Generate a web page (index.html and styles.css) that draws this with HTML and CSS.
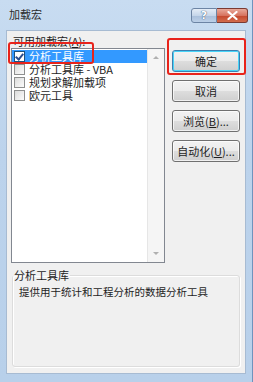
FILE: index.html
```html
<!DOCTYPE html>
<html>
<head>
    <title>加载宏</title>
    <link rel="stylesheet" href="styles.css">
</head>
<body>
    <div class="window">
        <div class="titlebar">
            <span class="title">加载宏</span>
            <div class="caption-buttons">
                <div class="cap-btn help">?</div>
                <div class="cap-btn close">
                    <svg width="11" height="9" viewBox="0 0 11 9">
                        <path d="M1.5 1 L9.5 8 M9.5 1 L1.5 8" stroke="#fff" stroke-width="2.2" stroke-linecap="round"/>
                    </svg>
                </div>
            </div>
        </div>
        <div class="client">
            <div class="label">可用加载宏(<u>A</u>):</div>
            <div class="main-row">
                <div class="listbox">
                    <div class="items">
                        <div class="item selected"><span class="check on"></span>分析工具库</div>
                        <div class="item"><span class="check"></span>分析工具库 - VBA</div>
                        <div class="item"><span class="check"></span>规划求解加载项</div>
                        <div class="item"><span class="check"></span>欧元工具</div>
                    </div>
                    <div class="scrollbar">
                        <span class="arrow up"></span>
                        <span class="arrow down"></span>
                    </div>
                </div>
                <div class="buttons">
                    <button class="btn default">确定</button>
                    <button class="btn">取消</button>
                    <button class="btn">浏览(<u>B</u>)...</button>
                    <button class="btn">自动化(<u>U</u>)...</button>
                </div>
            </div>
            <fieldset class="groupbox">
                <legend>分析工具库</legend>
                <div class="desc">提供用于统计和工程分析的数据分析工具</div>
            </fieldset>
        </div>
        <div class="mark mark-list"></div>
        <div class="mark mark-ok"></div>
    </div>
</body>
</html>
```
FILE: styles.css
```css
html, body {
    margin: 0;
    padding: 0;
}
body {
    width: 253px;
    height: 382px;
    overflow: hidden;
    font-family: "Noto Sans CJK SC", "Liberation Sans", sans-serif;
    font-size: 11px;
    color: #1e1e1e;
}
.window {
    position: relative;
    box-sizing: border-box;
    width: 253px;
    height: 382px;
    padding: 0 6px 8px 6px;
    display: flex;
    flex-direction: column;
    background: linear-gradient(to bottom, #c8dcf1 0%, #bcd3ec 40%, #b8d0ea 100%);
    border-right: 1px solid #6f93bd;
}
.titlebar {
    height: 30px;
    display: flex;
    align-items: flex-start;
    justify-content: space-between;
    flex-shrink: 0;
}
.title {
    margin: 7px 0 0 3px;
    line-height: 14px;
    color: #2a2a2a;
}
.caption-buttons {
    display: flex;
    margin-top: 8px;
    margin-right: -2px;
}
.cap-btn {
    height: 15px;
    box-sizing: border-box;
    border: 1px solid #6c84a4;
    display: flex;
    align-items: center;
    justify-content: center;
}
.cap-btn.help {
    width: 26px;
    border-radius: 3px 0 0 3px;
    background: linear-gradient(to bottom, #e4edf7 0%, #c6d6ea 50%, #a9bfdb 51%, #bcd0e8 100%);
    color: #fff;
    font-family: "DejaVu Sans", sans-serif;
    font-weight: bold;
    font-size: 11px;
    text-shadow: 0 0 1px #3b5777, 0 0 1px #3b5777;
    line-height: 1;
}
.cap-btn.close {
    width: 31px;
    border-color: #7b3a32;
    border-left: none;
    border-radius: 0 3px 3px 0;
    background: linear-gradient(to bottom, #e9a99a 0%, #d7735f 50%, #c4462c 51%, #d26c4d 100%);
}
.client {
    flex: 1;
    background: #f0f0f0;
    border: 1px solid #a7bbd2;
    padding: 0 5px 0 4px;
    display: flex;
    flex-direction: column;
}
.label {
    margin: 3px 0 0 2px;
    height: 14px;
    line-height: 14px;
}
.label u, .btn u {
    text-decoration: underline;
    text-underline-offset: 1px;
}
.main-row {
    display: flex;
    justify-content: space-between;
}
.listbox {
    width: 154px;
    height: 215px;
    box-sizing: border-box;
    border: 1px solid #828790;
    background: #fff;
    display: flex;
}
.items {
    flex: 1;
    padding-top: 1px;
}
.item {
    height: 13px;
    line-height: 13px;
    display: flex;
    align-items: center;
    padding-left: 2px;
    color: #1e1e1e;
    white-space: nowrap;
}
.item.selected {
    background: #3399ff;
    color: #fff;
}
.check {
    width: 11px;
    height: 11px;
    box-sizing: border-box;
    border: 1px solid #8e8f8f;
    background: linear-gradient(135deg, #dcdcdc, #fbfbfb);
    margin-right: 4px;
    flex-shrink: 0;
    position: relative;
}
.check.on {
    background: #fff;
    border-color: #1c5180;
}
.check.on::after {
    content: "";
    position: absolute;
    left: 2px;
    top: 0;
    width: 3px;
    height: 6px;
    border: solid #2a4d8f;
    border-width: 0 2px 2px 0;
    transform: rotate(40deg);
}
.scrollbar {
    width: 16px;
    background: #f5f5f5;
    border-left: 1px solid #e6e6e6;
    display: flex;
    flex-direction: column;
    justify-content: space-between;
    align-items: center;
    padding: 7px 0;
}
.arrow {
    width: 0;
    height: 0;
    border-left: 3px solid transparent;
    border-right: 3px solid transparent;
}
.arrow.up {
    border-bottom: 3px solid #b0b0b0;
}
.arrow.down {
    border-top: 3px solid #b0b0b0;
}
.buttons {
    display: flex;
    flex-direction: column;
    gap: 8px;
    margin-top: 2px;
}
.btn {
    width: 68px;
    height: 22px;
    box-sizing: border-box;
    border: 1px solid #707070;
    border-radius: 3px;
    background: linear-gradient(to bottom, #f2f2f2 0%, #ebebeb 50%, #dddddd 51%, #cfcfcf 100%);
    font-family: inherit;
    font-size: 11px;
    color: #1e1e1e;
    padding: 0;
    line-height: 20px;
    box-shadow: inset 0 0 0 1px rgba(255, 255, 255, 0.7);
}
.btn.default {
    border-color: #3c7fb1;
    box-shadow: inset 0 0 0 1px #48d4f8;
}
.groupbox {
    margin: 5px 0 6px 1px;
    padding: 3px 6px 0 6px;
    border: 1px solid #dcdcdc;
    border-radius: 3px;
    box-shadow: 1px 1px 0 #fff, inset 1px 1px 0 #fff;
    flex: 1;
    min-width: 0;
}
.groupbox legend {
    padding: 0 1px;
    margin-left: -6px;
    line-height: 14px;
}
.desc {
    line-height: 14px;
    font-size: 10.5px;
    white-space: nowrap;
}
.mark {
    position: absolute;
    border: 2px solid #e8231b;
    border-radius: 3px;
    box-sizing: border-box;
}
.mark-list {
    left: 8px;
    top: 42px;
    width: 86px;
    height: 22px;
}
.mark-ok {
    left: 167px;
    top: 38px;
    width: 79px;
    height: 37px;
}
```
